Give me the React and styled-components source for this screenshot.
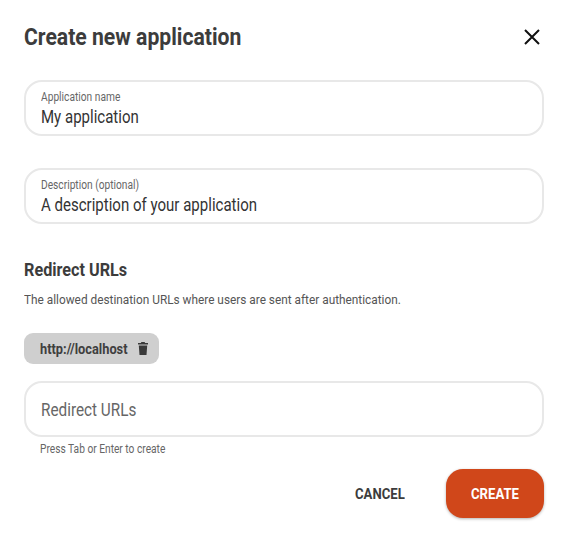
import React from 'react'
import styled, { createGlobalStyle } from 'styled-components'

const GlobalStyle = createGlobalStyle`
  html, body {
    margin: 0;
    padding: 0;
    background: #fff;
  }
  * {
    box-sizing: border-box;
  }
`

// the reference face is a narrow DIN, Roboto is squeezed to its widths
const Narrow = styled.div`
  white-space: nowrap;
  text-align: left;
  transform-origin: left center;
  transform: scaleX(${p => p.$x || 0.85});
`

const Dialog = styled.div`
  width: 569px;
  height: 543px;
  padding: 20px 25px 0 24px;
  font-family: 'Roboto', 'Liberation Sans', sans-serif;
  color: #3c3c3c;
  display: flex;
  flex-direction: column;
`

const Header = styled.div`
  display: flex;
  align-items: center;
  justify-content: space-between;
  height: 34px;
  margin-bottom: 26px;
`

const Title = styled(Narrow).attrs({ as: 'h1', $x: 0.92 })`
  margin: 0;
  font-size: 23px;
  font-weight: 700;
  color: #3c3c3c;
`

const CloseButton = styled.button`
  border: 0;
  background: none;
  padding: 0;
  margin-right: 3px;
  width: 18px;
  height: 18px;
  color: #111;
  display: flex;
`

const Field = styled.div`
  height: 56px;
  border: 2px solid #e8e8e8;
  border-radius: 18px;
  padding: 8px 15px 0;
  margin-bottom: 32px;
  display: flex;
  flex-direction: column;
  justify-content: ${p => (p.$center ? 'center' : 'flex-start')};
  background: #fff;
`

const FieldLabel = styled(Narrow)`
  font-size: 12px;
  line-height: 14px;
  color: #666;
`

const FieldValue = styled(Narrow).attrs({ $x: 0.835 })`
  margin-top: 1px;
  font-size: 18px;
  line-height: 23px;
  color: #333;
`

const Placeholder = styled(Narrow)`
  font-size: 18px;
  line-height: 23px;
  color: #666;
  margin-top: -8px;
`

const SectionTitle = styled(Narrow).attrs({ as: 'h2', $x: 0.9 })`
  margin: 2px 0 0;
  font-size: 18px;
  line-height: 24px;
  font-weight: 700;
  color: #3c3c3c;
`

const SectionText = styled(Narrow).attrs({ as: 'p', $x: 0.91 })`
  margin: 10px 0 0;
  font-size: 13px;
  line-height: 16px;
  color: #555;
`

const Chip = styled.div`
  align-self: flex-start;
  margin: 25px 0 17px;
  height: 31px;
  width: 135px;
  padding: 0 11px 0 16px;
  border-radius: 9px;
  background: #cfcfcf;
  display: flex;
  align-items: center;
  justify-content: space-between;
`

const ChipText = styled(Narrow).attrs({ $x: 0.915 })`
  width: 87px;
  font-size: 14px;
  font-weight: 700;
  color: #3f3f3f;
`

const Hint = styled(Narrow)`
  margin: -27px 0 0 16px;
  font-size: 12px;
  line-height: 14px;
  color: #666;
`

const Actions = styled.div`
  margin-top: 13px;
  display: flex;
  justify-content: flex-end;
  align-items: center;
  gap: 41px;
`

const CancelButton = styled.button`
  border: 0;
  background: none;
  padding: 0;
  width: 50px;
  font: inherit;
  font-size: 15px;
  font-weight: 700;
  color: #3c3c3c;
`

const CreateButton = styled.button`
  border: 0;
  width: 98px;
  height: 49px;
  padding: 0 0 0 25px;
  border-radius: 17px;
  background: #d0471a;
  box-shadow: 0 1px 3px rgba(0, 0, 0, 0.3);
  font: inherit;
  font-size: 15px;
  font-weight: 700;
  color: #fff;
`

const ButtonLabel = styled(Narrow).attrs({ $x: 0.875 })``

const TrashSvg = styled.svg`
  flex-shrink: 0;
`

const CloseIcon = () => (
  <svg viewBox="0 0 18 18" width="18" height="18" fill="none" stroke="currentColor" strokeWidth="2">
    <path d="M2 2l14 14M16 2L2 16" />
  </svg>
)

const TrashIcon = () => (
  <TrashSvg viewBox="0 0 10 13" width="10" height="13" fill="#3a3a3a">
    <path d="M3.4 0h3.2l.5 1H10v1.5H0V1h2.9zM.8 3.4h8.4L8.5 13h-7z" />
  </TrashSvg>
)

const App = () => (
  <Dialog>
    <GlobalStyle />
    <Header>
      <Title>Create new application</Title>
      <CloseButton aria-label="Close">
        <CloseIcon />
      </CloseButton>
    </Header>
    <Field>
      <FieldLabel>Application name</FieldLabel>
      <FieldValue>My application</FieldValue>
    </Field>
    <Field>
      <FieldLabel>Description (optional)</FieldLabel>
      <FieldValue>A description of your application</FieldValue>
    </Field>
    <SectionTitle>Redirect URLs</SectionTitle>
    <SectionText>The allowed destination URLs where users are sent after authentication.</SectionText>
    <Chip>
      <ChipText>http://localhost</ChipText>
      <TrashIcon />
    </Chip>
    <Field $center>
      <Placeholder>Redirect URLs</Placeholder>
    </Field>
    <Hint>Press Tab or Enter to create</Hint>
    <Actions>
      <CancelButton>
        <ButtonLabel>CANCEL</ButtonLabel>
      </CancelButton>
      <CreateButton>
        <ButtonLabel>CREATE</ButtonLabel>
      </CreateButton>
    </Actions>
  </Dialog>
)

export default App
